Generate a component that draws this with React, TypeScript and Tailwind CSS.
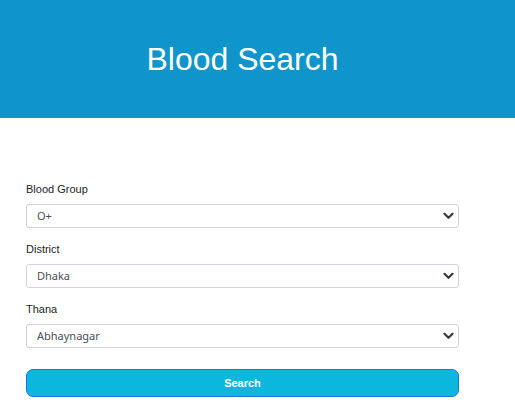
import React, { useState } from 'react';

const fields = [
  { label: 'Blood Group', value: 'O+', options: ['A+', 'A-', 'B+', 'B-', 'O+', 'O-', 'AB+', 'AB-'] },
  { label: 'District', value: 'Dhaka', options: ['Dhaka', 'Chittagong', 'Khulna', 'Rajshahi'] },
  { label: 'Thana', value: 'Abhaynagar', options: ['Abhaynagar', 'Bagerhat', 'Jessore'] },
];

const Chevron = () => (
  <svg className="pointer-events-none absolute right-[5px] top-1/2 -translate-y-1/2" width="11" height="8" viewBox="0 0 11 8" fill="none">
    <path d="M1.5 1.8l4 4 4-4" stroke="#343a40" strokeWidth="2.2" strokeLinecap="round" strokeLinejoin="round" />
  </svg>
);

const App = () => {
  const [values, setValues] = useState(fields.map((f) => f.value));

  return (
    <div className="min-h-[405px] bg-white font-['Liberation_Sans',Arial,sans-serif]">
      {/* Header */}
      <div className="flex h-[118px] items-center justify-center bg-[#0f94cb] pr-[30px]">
        <h1 className="text-[32px] leading-none text-white">Blood Search</h1>
      </div>

      {/* Form */}
      <form className="ml-[26px] flex w-[433px] flex-col pt-[64px]" onSubmit={(e) => e.preventDefault()}>
        {fields.map((f, i) => (
          <div key={f.label} className="mb-[14px]">
            <label className="mb-[8px] block text-[11px] leading-[14px] text-[#212529]">{f.label}</label>
            <div className="relative">
              <select
                className="block h-[24px] w-full appearance-none rounded-[3px] border border-[#ced4da] bg-white pl-[10px] font-['Noto_Sans',sans-serif] text-[11px] text-[#495057] outline-none"
                value={values[i]}
                onChange={(e) => setValues(values.map((v, j) => (j === i ? e.target.value : v)))}
              >
                {f.options.map((o) => (
                  <option key={o}>{o}</option>
                ))}
              </select>
              <Chevron />
            </div>
          </div>
        ))}
        <button
          type="submit"
          className="mt-[7px] block h-[28px] w-full rounded-[7px] border border-[#1a73e8] bg-[#0cb7dd] text-[11px] font-bold text-white"
        >
          Search
        </button>
      </form>
    </div>
  );
};

export default App;
